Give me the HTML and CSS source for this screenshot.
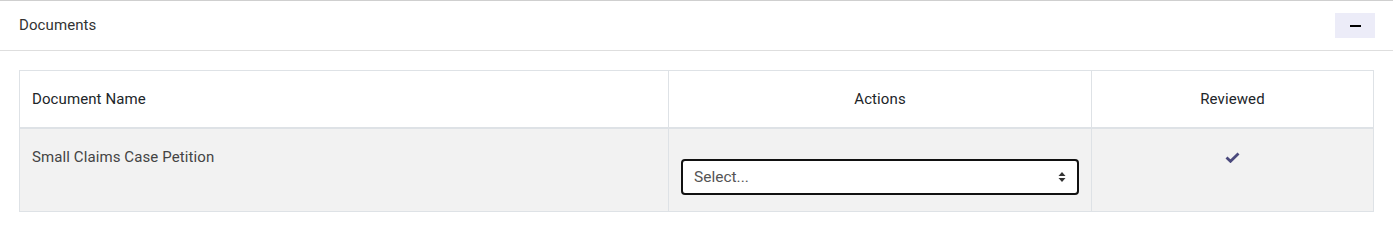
FILE: index.html
```html
<!DOCTYPE html>
<html>
<head>
<meta charset="utf-8">
<link rel="stylesheet" href="styles.css">
</head>
<body>
<section class="panel">
  <header class="panel-head">
    <span class="panel-title">Documents</span>
    <button class="collapse-btn" type="button" aria-label="Collapse"><span class="minus"></span></button>
  </header>
  <div class="panel-body">
    <table class="doc-table">
      <thead>
        <tr>
          <th class="col-name">Document Name</th>
          <th class="col-actions">Actions</th>
          <th class="col-reviewed">Reviewed</th>
        </tr>
      </thead>
      <tbody>
        <tr>
          <td class="col-name">Small Claims Case Petition</td>
          <td class="col-actions">
            <div class="select-wrap">
              <select class="action-select">
                <option>Select...</option>
              </select>
              <svg class="select-arrows" width="8" height="12" viewBox="0 0 8 12"><path d="M4 1 L7.5 5 H0.5 Z M4 11 L7.5 7 H0.5 Z" fill="#333"/></svg>
            </div>
          </td>
          <td class="col-reviewed">
            <svg class="check" width="15" height="11" viewBox="0 0 15 11"><path d="M1.5 5.5 L5.5 9.3 L13.5 1.5" fill="none" stroke="#4b4a7d" stroke-width="2.8" stroke-linecap="butt" stroke-linejoin="miter"/></svg>
          </td>
        </tr>
      </tbody>
    </table>
  </div>
</section>
</body>
</html>
```
FILE: styles.css
```css
html, body {
  margin: 0;
  padding: 0;
  background: #fff;
}
body {
  font-family: Roboto, "Liberation Sans", Arial, sans-serif;
  font-size: 15px;
  letter-spacing: 0.1px;
  color: #212529;
}
.panel {
  border-top: 1px solid #cfcfcf;
}
.panel-head {
  height: 49px;
  display: flex;
  align-items: center;
  justify-content: space-between;
  padding: 0 18px 0 19px;
  border-bottom: 1px solid #dedede;
}
.panel-title {
  font-size: 15px;
  color: #333;
  margin-bottom: 2px;
}
.collapse-btn {
  width: 40px;
  height: 25px;
  border: 0;
  padding: 0;
  margin: 0;
  background: #ececf8;
  display: flex;
  align-items: center;
  justify-content: center;
  cursor: pointer;
}
.minus {
  display: block;
  width: 11px;
  height: 2px;
  background: #000;
}
.panel-body {
  padding: 19px 19px;
}
.doc-table {
  width: 100%;
  border-collapse: collapse;
  border: 1px solid #dee2e6;
  table-layout: fixed;
}
.doc-table th, .doc-table td {
  border: 1px solid #dee2e6;
  padding: 18px 12px 17px;
  line-height: 21px;
  vertical-align: top;
}
.doc-table th {
  font-weight: 400;
  color: #212529;
  border-bottom: 2px solid #dee2e6;
}
.doc-table tbody td {
  background: #f2f2f2;
  color: #444;
  padding-bottom: 16px;
}
.col-name { width: 624px; text-align: left; }
.col-actions { width: 398px; text-align: center; }
.col-reviewed { text-align: center; }
.select-wrap {
  position: relative;
  margin-top: 12px;
}
.action-select {
  display: block;
  width: 100%;
  height: 36px;
  appearance: none;
  -webkit-appearance: none;
  border: 2px solid #111;
  border-radius: 4px;
  background: #fff;
  padding: 0 30px 0 11px;
  font-family: Roboto, "Liberation Sans", Arial, sans-serif;
  font-size: 15.5px;
  color: #555;
  text-align: left;
}
.select-arrows {
  position: absolute;
  right: 13px;
  top: 12px;
  pointer-events: none;
}
.check {
  display: inline-block;
  margin-top: 5px;
}
```
